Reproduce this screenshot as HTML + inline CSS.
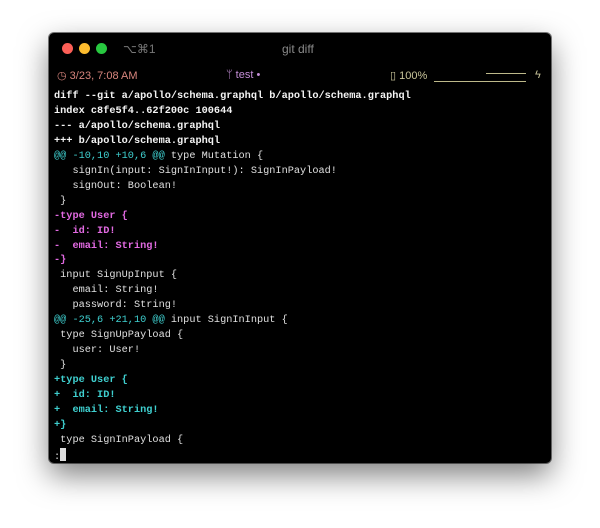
<!DOCTYPE html>
<html><head><meta charset="utf-8"><style>
html,body{margin:0;padding:0;background:#fff;width:600px;height:528px;overflow:hidden;position:relative}
.win{position:absolute;left:49px;top:33px;width:502px;height:430px;background:#000;border-radius:5px;box-shadow:0 12px 30px rgba(0,0,0,.5),0 0 0 1px rgba(0,0,0,.5)}
.dot{position:absolute;top:10px;width:11px;height:11px;border-radius:50%}
.t{position:absolute;font-family:"Liberation Sans",sans-serif;font-size:12px;color:#8a8a8a}
.st{position:absolute;top:36px;font-family:"Liberation Sans",sans-serif;font-size:11px}
pre{position:absolute;left:5px;top:56px;margin:0;font-family:"Liberation Mono",monospace;font-size:10.25px;line-height:14.96px;color:#e0e0e0}
.h{color:#f4f4f4;font-weight:bold}
.c{color:#3fd0d0}
.cb{color:#3fd0d0;font-weight:bold}
.m{color:#e26ae2;font-weight:bold}
.cur{display:inline-block;width:6px;height:13px;background:#ddd;vertical-align:-2px}
</style></head><body>
<div class="win">
<div class="dot" style="left:13px;background:#fc5f57"></div>
<div class="dot" style="left:30px;background:#fdbc2e"></div>
<div class="dot" style="left:47px;background:#28c840"></div>
<div class="t" style="left:74px;top:9px;color:#777">⌥⌘1</div>
<div class="t" style="left:233px;top:9px">git diff</div>
<div class="st" style="left:8px;color:#d9867e">◷ 3/23, 7:08 AM</div>
<div class="st" style="left:177px;color:#c58fd8">ᛘ test •</div>
<div class="st" style="left:341px;color:#c9c59a">▯ 100%</div>
<div style="position:absolute;left:385px;top:48px;width:92px;height:1px;background:#bdb98a"></div>
<div style="position:absolute;left:437px;top:40px;width:40px;height:1px;background:#bdb98a"></div>
<div class="st" style="left:486px;color:#c9c59a">ϟ</div>
<pre><span class="h">diff --git a/apollo/schema.graphql b/apollo/schema.graphql
index c8fe5f4..62f200c 100644
--- a/apollo/schema.graphql
+++ b/apollo/schema.graphql</span>
<span class="c">@@ -10,10 +10,6 @@</span> type Mutation {
   signIn(input: SignInInput!): SignInPayload!
   signOut: Boolean!
 }
<span class="m">-type User {
-  id: ID!
-  email: String!
-}</span>
 input SignUpInput {
   email: String!
   password: String!
<span class="c">@@ -25,6 +21,10 @@</span> input SignInInput {
 type SignUpPayload {
   user: User!
 }
<span class="cb">+type User {
+  id: ID!
+  email: String!
+}</span>
 type SignInPayload {
:<span class="cur"></span></pre>
</div>
</body></html>
